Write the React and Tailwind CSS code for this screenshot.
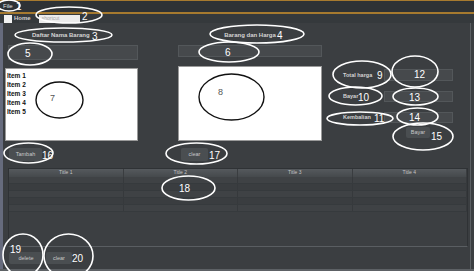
import React from 'react';

const items = ['Item 1', 'Item 2', 'Item 3', 'Item 4', 'Item 5'];
const titles = ['Title 1', 'Title 2', 'Title 3', 'Title 4'];

// white hand-drawn marks over the form: [cx, cy, rx, ry]
const marks = [
  [9, 5.5, 11, 5.5],
  [69, 15, 33, 8],
  [63.5, 35, 48.5, 7],
  [257, 34, 47, 9],
  [30, 54, 22, 11],
  [229, 52, 30, 10],
  [362, 74.5, 29, 13.5],
  [355.5, 96, 26.5, 9],
  [360, 118.5, 33, 6.5],
  [415, 71.5, 23, 15.5],
  [415.5, 96.5, 22.5, 8.5],
  [417.5, 116.5, 20.5, 8.5],
  [423, 136.5, 30, 13.5],
  [28.5, 153, 24.5, 10],
  [196.5, 153.5, 30.5, 10.5],
  [188.5, 188, 26.5, 12],
  [23, 255, 20, 21],
  [68.5, 256, 24.5, 22],
];

// [label, x, baseline]
const numbers = [
  ['1', 16, 10],
  ['2', 82, 20],
  ['3', 92, 40],
  ['4', 277, 39],
  ['5', 25, 57],
  ['6', 225, 56],
  ['9', 377, 79],
  ['10', 358, 101],
  ['11', 374, 122],
  ['12', 414, 78],
  ['13', 409, 101],
  ['14', 409, 121],
  ['15', 431, 140],
  ['16', 42, 159],
  ['17', 209, 159],
  ['18', 179, 192],
  ['19', 10, 253],
  ['20', 72, 262],
];

function Annotations() {
  return (
    <svg className="absolute inset-0 pointer-events-none" width="474" height="271" viewBox="0 0 474 271">
      {marks.map(([cx, cy, rx, ry], i) => (
        <ellipse key={i} cx={cx} cy={cy} rx={rx} ry={ry} fill="none" stroke="#ffffff" strokeWidth="1.6" />
      ))}
      <ellipse cx="59.5" cy="100" rx="23.5" ry="18" fill="none" stroke="#111111" strokeWidth="1.4" />
      <ellipse cx="231.5" cy="97" rx="32.5" ry="23" fill="none" stroke="#111111" strokeWidth="1.4" />
      <text x="50" y="101" fontSize="9" fill="#555555" fontFamily="Liberation Sans, sans-serif">7</text>
      <text x="218" y="95" fontSize="9" fill="#555555" fontFamily="Liberation Sans, sans-serif">8</text>
      {numbers.map(([t, x, y]) => (
        <text key={t} x={x} y={y} fontSize="10" fill="#ffffff" fontFamily="Liberation Sans, sans-serif">{t}</text>
      ))}
    </svg>
  );
}

function Btn({ children, className = '' }) {
  return (
    <div className={`flex items-center justify-center rounded-[2px] bg-[#4a4e51] text-[5.5px] text-[#c9c9c9] ${className}`}>
      {children}
    </div>
  );
}

function Field({ className = '' }) {
  return <div className={`bg-[#46494c] border border-[#53575a] ${className}`} />;
}

export default function App() {
  return (
    <div className="relative w-[474px] h-[271px] overflow-hidden bg-[#3b3e41] font-['Liberation_Sans',sans-serif]">
      {/* menu */}
      <div className="h-[14px] bg-[#2e3235] border-t border-b-2 border-[#a67a2f] flex items-center px-[3px]">
        <span className="text-[6px] text-[#e0e0e0]">File</span>
      </div>

      {/* toolbar */}
      <div className="h-[9px] flex items-center bg-[#35393c]">
        <div className="ml-[4px] w-[8px] h-[8px] bg-[#f2f2f2]" />
        <span className="ml-[2px] text-[6px] font-bold text-[#cfcfcf]">Home</span>
        <div className="ml-[8px] w-[41px] h-[8px] bg-[#ececec] flex items-center px-[3px] text-[5px] text-[#a8a8a8]">shortcut</div>
      </div>

      <div className="flex h-[246px]">
        <div className="w-[3px] bg-[#666b7d]" />
        <div className="w-[468px] border-r border-[#5b5f63] flex flex-col">
          {/* top section */}
          <div className="flex h-[118px]">
            <div className="ml-[2px] w-[133px] flex flex-col pt-[7px]">
              <div className="h-[10px] flex items-center pl-[27px] text-[6px] font-bold text-[#d4d4d4]">Daftar Nama Barang</div>
              <Field className="mt-[5px] ml-[3px] h-[15px]" />
              <div className="mt-[8px] h-[73px] bg-white border border-[#9a9a9a] pl-[1px] pt-[2px] flex flex-col">
                {items.map((it) => (
                  <div key={it} className="h-[9px] leading-[9px] text-[6.5px] font-bold text-[#111]">{it}</div>
                ))}
              </div>
            </div>

            <div className="ml-[40px] w-[144px] flex flex-col pt-[7px]">
              <div className="h-[10px] flex items-center justify-center text-[6px] font-bold text-[#d4d4d4]">Barang dan Harga</div>
              <Field className="mt-[5px] h-[12px]" />
              <div className="mt-[9px] h-[75px] bg-white border border-[#9a9a9a]" />
            </div>

            <div className="ml-[7px] w-[139px] flex flex-col pt-[46px]">
              <div className="h-[12px] flex items-center">
                <span className="w-[55px] pl-[14px] text-[5.5px] font-bold text-[#d4d4d4]">Total harga</span>
                <Field className="w-[69px] h-[12px]" />
              </div>
              <div className="mt-[10px] h-[11px] flex items-center">
                <span className="w-[55px] pl-[14px] text-[5.5px] font-bold text-[#d4d4d4]">Bayar</span>
                <Field className="w-[69px] h-[11px]" />
              </div>
              <div className="mt-[10px] h-[11px] flex items-center">
                <span className="w-[55px] pl-[14px] text-[5.5px] font-bold text-[#d4d4d4]">Kembalian</span>
                <Field className="w-[69px] h-[11px]" />
              </div>
              <Btn className="mt-[4px] ml-[77px] w-[24px] h-[11px]">Bayar</Btn>
            </div>
          </div>

          {/* buttons */}
          <div className="mt-[7px] h-[14px] flex">
            <Btn className="ml-[6px] w-[33px] h-[13px]">Tambah</Btn>
            <Btn className="ml-[139px] w-[27px] h-[13px]">clear</Btn>
          </div>

          {/* table */}
          <div className="mt-[6px] ml-[5px] w-[460px] h-[79px] border border-[#2f3235] border-b-[#5a5e62] flex flex-col">
            <div className="h-[8px] grid grid-cols-4 bg-gradient-to-b from-[#55595d] to-[#45494c]">
              {titles.map((t) => (
                <div key={t} className="flex items-center justify-center border-r border-[#3a3d40] text-[5px] text-[#c4c4c4]">{t}</div>
              ))}
            </div>
            {[0, 1, 2, 3, 4].map((r) => (
              <div key={r} className={`h-[7px] grid grid-cols-4 border-b border-[#363a3d] ${r % 2 ? 'bg-[#3a3d40]' : 'bg-[#3f4245]'}`}>
                {titles.map((t) => (
                  <div key={t} className="border-r border-[#36393c]" />
                ))}
              </div>
            ))}
            <div className="flex-1 bg-[#3c3f42]" />
          </div>

          {/* bottom */}
          <div className="mt-[5px] h-[13px] flex">
            <Btn className="ml-[6px] w-[34px] h-[12px]">delete</Btn>
            <Btn className="ml-[3px] w-[26px] h-[12px]">clear</Btn>
          </div>
        </div>
      </div>
      <div className="h-[2px] bg-[#5d6165]" />

      <Annotations />
    </div>
  );
}
